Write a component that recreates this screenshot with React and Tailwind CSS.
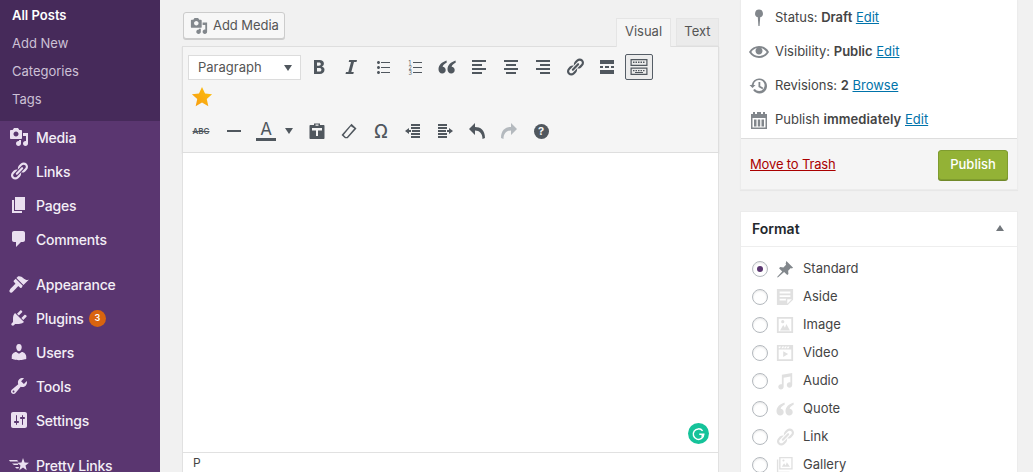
import React from "react";

const P = {
  media: "M13 11V4c0-.55-.45-1-1-1h-1.67L9 1H5L3.67 3H2c-.55 0-1 .45-1 1v7c0 .55.45 1 1 1h10c.55 0 1-.45 1-1zM7 4.5c1.38 0 2.5 1.12 2.5 2.5S8.38 9.5 7 9.5 4.5 8.38 4.5 7 5.62 4.5 7 4.5zM14 6h5v10.5c0 1.38-1.12 2.5-2.5 2.5S14 17.88 14 16.5s1.12-2.5 2.5-2.5c.17 0 .34.02.5.05V9h-3V6zm-4 8.05V13h2v3.5c0 1.38-1.12 2.5-2.5 2.5S7 17.88 7 16.5 8.12 14 9.5 14c.17 0 .34.02.5.05z",
  links: "M17.74 2.76c1.68 1.69 1.68 4.41 0 6.1l-1.53 1.52c-1.12 1.12-2.7 1.47-4.14 1.09l2.62-2.61.76-.77.76-.76c.84-.84.84-2.2 0-3.04-.84-.85-2.2-.85-3.04 0l-.77.76-3.38 3.38c-.37-1.44-.02-3.02 1.1-4.14l1.52-1.53c1.69-1.68 4.42-1.68 6.1 0zM8.59 13.43l5.34-5.34c.42-.42.42-1.1 0-1.52-.44-.43-1.13-.39-1.53 0l-5.33 5.34c-.42.42-.42 1.1 0 1.52.44.43 1.13.39 1.52 0zm-.76 2.29l4.14-4.15c.38 1.44.03 3.02-1.09 4.14l-1.52 1.53c-1.69 1.68-4.41 1.68-6.1 0-1.68-1.68-1.68-4.42 0-6.1l1.53-1.52c1.12-1.12 2.7-1.47 4.14-1.1l-4.14 4.15c-.85.84-.85 2.2 0 3.05.84.84 2.2.84 3.04 0z",
  pages: "M6 15V2h10v13H6zm-1 1h8v2H3V5h2v11z",
  comments: "M5 2h9c1.1 0 2 .9 2 2v7c0 1.1-.9 2-2 2h-2l-5 5v-5H5c-1.1 0-2-.9-2-2V4c0-1.1.9-2 2-2z",
  appearance: "M14.48 11.06L7.41 3.99l1.5-1.5c.5-.56 2.3-.47 3.51.32 1.21.8 1.43 1.28 2.91 2.1 1.18.64 2.45 1.26 4.45.85zm-.71.71L6.7 4.7 4.93 6.47c-.39.39-.39 1.02 0 1.41l1.06 1.06c.39.39.39 1.03 0 1.42-.6.6-3.6 3.4-5.1 5.3-1 1.2-.4 2.2.5 2.8.8.5 1.6.3 2.4-.6 1.4-1.6 4.3-4.7 4.9-5.2.39-.39 1.02-.39 1.41 0l1.06 1.06c.39.39 1.02.39 1.41 0z",
  plugins: "M13.11 4.36L9.87 7.6 8 5.73l3.24-3.24c.35-.34 1.05-.2 1.56.32.52.51.66 1.21.31 1.55zm-8 1.77l.91-1.12 9.01 9.01-1.19.84c-.71.71-2.63 1.16-3.82 1.16H6.14L4.9 17.26c-.59.59-1.54.59-2.12 0-.59-.58-.59-1.53 0-2.12l1.24-1.24v-3.88c0-1.13.4-3.19 1.09-3.89zm7.26 3.97l3.24-3.24c.34-.35 1.04-.21 1.55.31.52.51.66 1.21.31 1.55l-3.24 3.25z",
  users: "M10 9.25c-2.27 0-2.73-3.44-2.73-3.44C7 4.02 7.82 2 9.97 2c2.16 0 2.98 2.02 2.71 3.81 0 0-.41 3.44-2.68 3.44zm0 2.57L12.72 10c2.39 0 4.52 2.33 4.52 4.53v2.49s-3.65 1.13-7.24 1.13c-3.65 0-7.24-1.13-7.24-1.13v-2.49c0-2.25 1.94-4.48 4.47-4.48z",
  tools: "M16.68 9.77c-1.34 1.34-3.3 1.67-4.95.99l-5.41 6.52c-.99.99-2.59.99-3.58 0s-.99-2.59 0-3.57l6.52-5.42c-.68-1.65-.35-3.61.99-4.95 1.28-1.28 3.12-1.62 4.72-1.06l-2.89 2.89 2.82 2.82 2.86-2.87c.53 1.58.18 3.39-1.08 4.65zM3.81 16.21c.4.39 1.04.39 1.43 0 .4-.4.4-1.04 0-1.43-.39-.4-1.03-.4-1.43 0-.39.39-.39 1.03 0 1.43z",
  settings: "M18 16V4c0-1.1-.9-2-2-2H4c-1.1 0-2 .9-2 2v12c0 1.1.9 2 2 2h12c1.1 0 2-.9 2-2zM8 11h1c.55 0 1 .45 1 1s-.45 1-1 1H8v1.5c0 .28-.22.5-.5.5s-.5-.22-.5-.5V13H6c-.55 0-1-.45-1-1s.45-1 1-1h1V5.5c0-.28.22-.5.5-.5s.5.22.5.5V11zm5-2h-1c-.55 0-1-.45-1-1s.45-1 1-1h1V5.5c0-.28.22-.5.5-.5s.5.22.5.5V7h1c.55 0 1 .45 1 1s-.45 1-1 1h-1v5.5c0 .28-.22.5-.5.5s-.5-.22-.5-.5V9z",
  pretty: "M0 5h8l1.5 1.5H1zM3 8.5h6.5l-.6 1.6H5zM6 12h4l-.6 1.5H7.5zM14 3l1.6 4.6 4.4.2-3.5 2.8 1.2 4.6-3.7-2.7-3.7 2.7 1.2-4.6-3-2.8 4-.2z",
  bold: "M5 3h5.6c2.6 0 4.3 1.3 4.3 3.5 0 1.5-.8 2.5-2.1 3 1.7.4 2.7 1.6 2.7 3.3 0 2.6-1.9 4.2-4.8 4.2H5zm3 2.4v3.3h1.9c1.2 0 1.9-.6 1.9-1.7s-.7-1.6-1.9-1.6zm0 5.5v3.7h2.2c1.4 0 2.2-.7 2.2-1.9 0-1.2-.8-1.8-2.2-1.8z",
  italic: "M16 3l-.5 2h-2.500l-2.700 10h2.500l-.5 2H4.500l.5-2h2.300l2.700-10H7.700l.5-2z",
  ul: "M5.5 7C4.67 7 4 6.33 4 5.5 4 4.68 4.67 4 5.5 4 6.32 4 7 4.68 7 5.5 7 6.33 6.32 7 5.5 7zM8 5h9v1H8V5zm-2.5 7c-.83 0-1.5-.67-1.5-1.5C4 9.68 4.67 9 5.5 9c.82 0 1.5.68 1.5 1.5 0 .83-.68 1.5-1.5 1.5zM8 10h9v1H8v-1zm-2.5 7c-.83 0-1.5-.67-1.5-1.5 0-.82.67-1.5 1.5-1.5.82 0 1.5.68 1.5 1.5 0 .83-.68 1.5-1.5 1.5zM8 15h9v1H8v-1z",
  quote: "M9.500 3.500C5 5 1.500 8 1.500 12.300c0 2.400 1.500 4.200 3.700 4.200 2 0 3.500-1.400 3.500-3.400 0-1.900-1.300-3.300-3.100-3.400.4-1.500 1.900-3 4.200-4.100zM18.500 3.500C14 5 10.500 8 10.500 12.300c0 2.400 1.500 4.200 3.700 4.200 2 0 3.500-1.400 3.500-3.400 0-1.900-1.300-3.300-3.100-3.400.4-1.500 1.900-3 4.200-4.100z",
  alignL: "M3 3h14v2H3zM3 7h10v2H3zM3 11h14v2H3zM3 15h10v2H3z",
  alignC: "M3 3h14v2H3zM5 7h10v2H5zM3 11h14v2H3zM5 15h10v2H5z",
  alignR: "M3 3h14v2H3zM7 7h10v2H7zM3 11h14v2H3zM7 15h10v2H7z",
  more: "M3 3h14v4H3zM3 9h3v2H3zM8 9h4v2H8zM14 9h3v2h-3zM3 13h14v4H3z",
  hr: "M3 9h14v2H3z",
  clipboard: "M7 2.5h6V4h3.5c.6 0 1 .4 1 1v12c0 .6-.4 1-1 1h-13c-.6 0-1-.4-1-1V5c0-.6.4-1 1-1H7zM8.500 3.600v1.200h3V3.600zM5 7v2.500h4V15h2V9.500h4V7z",
  eraser: "M12.500 2.800l5 4.600-8.800 9.800H6L2.500 14zM11.900 5.200L4.700 13.900l2 2h1.200l7.400-8.400z",
  outdent: "M8 3h9v2H8zM8 6h9v2H8zM9 9h8v2H9zM8 12h9v2H8zM8 15h9v2H8zM2 10l4-3v2h2v2H6v2z",
  indent: "M3 3h9v2H3zM3 6h9v2H3zM3 9h8v2H3zM3 12h9v2H3zM3 15h9v2H3zM18 10l-4-3v2h-2v2h2v2z",
  undo: "M2 8l6-6v4c5.500 0 10 3 10 11l-2.500 1c0-5.500-3-8.500-7.500-8.500V14z",
  redo: "M18 8l-6-6v4C6.500 6 2 9 2 17l2.500 1c0-5.500 3-8.500 7.500-8.500V14z",
  pin: "M10 1.500a4 4 0 0 1 1.200 7.800L10.600 18h-1.200L8.800 9.300A4 4 0 0 1 10 1.500z",
  eye: "M19.700 9.400C17.700 6 14 3.900 10 3.900S2.300 6 .3 9.400L0 10l.3.6c2 3.400 5.700 5.500 9.700 5.500s7.700-2.100 9.700-5.500l.3-.6-.3-.6zM10 14.100c-3.100 0-6-1.600-7.700-4.100C3.600 8 5.700 6.600 8 6.100c-.9.600-1.500 1.700-1.500 2.900 0 1.900 1.600 3.500 3.500 3.500s3.500-1.600 3.500-3.500c0-1.200-.6-2.300-1.500-2.900 2.300.5 4.400 1.900 5.700 3.900-1.700 2.500-4.600 4.100-7.700 4.100z",
  clock: "M10.500 2.500a7.500 7.500 0 1 1-6.400 11.400l1.700-1a5.500 5.500 0 1 0-1.200-4H6.500L3.500 12 .5 8.900h2.100A7.500 7.500 0 0 1 10.500 2.500zM9.500 6h1.800v4.100l3 1.700-.9 1.500-3.900-2.300z",
  calendar: "M4 2h2v2h2V2h4v2h2V2h2v2h2v15H2V4h2zM3.500 8v9.500h13V8zM5 9.500h2.500v7H5zM8.800 9.500h2.400v7H8.800zM12.500 9.500H15v7h-2.500z",
  stickpin: "M11.500 1l7.500 7.500-1.500 1-1-.5-3 3 .3 3.500-1.300 1.300-3.500-3.500L2 19.500l-.8-.7 5.700-6.100-3.500-3.500 1.300-1.300 3.500.3 3-3-.5-1z",
  aside: "M1 1h18v12l-6 6H1zM4 4v2h12V4zM4 8v2h12V8zM4 12v2h7v-2zM12.500 17.500l5-5h-5z",
  image: "M1 1h18v18H1zM3 3v14h14V3zM4.500 16l3.500-6 2 3 1.500-4 4 7zM7.500 4.500a1.800 1.800 0 1 1 0 3.600 1.800 1.800 0 0 1 0-3.600z",
  video: "M1 1h18v18H1zM3 6v11h14V6zM3 2.700v2h1.500l1-2zM7 2.700l-1 2h2l1-2zM10 2.700l-1 2h2l1-2zM13 2.700l-1 2h2l1-2zM8 8l5.500 3.200L8 14.500z",
  audio: "M6.500 3L18 1v13.500c0 1.700-1.300 3-3 3s-3-1.300-3-3 1.300-3 3-3c.3 0 .6 0 1 .1V5l-7.500 1.300V16.500c0 1.700-1.300 3-3 3s-3-1.300-3-3 1.300-3 3-3c.4 0 .7 0 1 .1z",
  gallery: "M3.500 1h15v14h-15zM5 2.500v11h12v-11zM6.500 12l2.500-4 1.700 2.500L12 7l3.500 5zM8.300 3.800a1.200 1.200 0 1 1 0 2.400 1.200 1.200 0 0 1 0-2.400zM1 4h1.500v13.500H15V19H1z",
};

function I({ d, size = 20, cls = "" }) {
  return (
    <svg viewBox="0 0 20 20" width={size} height={size} className={`fill-current shrink-0 ${cls}`}>
      <path fillRule="evenodd" d={d} />
    </svg>
  );
}

const subItems = [
  ["All Posts", "font-semibold text-white"],
  ["Add New", "text-[#cdc1d6]"],
  ["Categories", "text-[#cdc1d6]"],
  ["Tags", "text-[#cdc1d6]"],
];

function Nav({ icon, label, gap, badge }) {
  return (
    <div className={`flex h-[34px] items-center pb-[2px] text-[14px] font-medium tracking-[-0.2px] text-[#f3eef6] ${gap ? "mt-[11px]" : ""}`}>
      <div className="flex w-9 justify-center pl-[2px] text-[#eadff0]">
        <I d={icon} />
      </div>
      <span>{label}</span>
      {badge && (
        <span className="ml-[5px] flex h-[17px] w-[17px] items-center justify-center rounded-full bg-[#d9640f] text-[9px] font-semibold text-white">
          {badge}
        </span>
      )}
    </div>
  );
}

function Sidebar() {
  return (
    <div className="w-40 shrink-0 bg-[#5a3670]">
      <div className="h-[121px] bg-[#462a5a] pt-[2px]">
        {subItems.map(([t, c]) => (
          <div key={t} className={`flex h-[28px] items-center pl-3 text-[13px] ${c}`}>{t}</div>
        ))}
      </div>
      <Nav icon={P.media} label="Media" />
      <Nav icon={P.links} label="Links" />
      <Nav icon={P.pages} label="Pages" />
      <Nav icon={P.comments} label="Comments" />
      <Nav icon={P.appearance} label="Appearance" gap />
      <Nav icon={P.plugins} label="Plugins" badge="3" />
      <Nav icon={P.users} label="Users" />
      <Nav icon={P.tools} label="Tools" />
      <Nav icon={P.settings} label="Settings" />
      <Nav icon={P.pretty} label="Pretty Links" gap />
    </div>
  );
}

function TB({ d, w = "w-8" }) {
  return (
    <div className={`flex h-[26px] ${w} items-center justify-center text-[#50575e]`}>
      <I d={d} />
    </div>
  );
}

function OL() {
  return (
    <div className="flex h-[26px] w-8 items-center justify-center text-[#50575e]">
      <svg viewBox="0 0 20 20" width="20" height="20" className="fill-current">
        <path d="M8 5h9v1H8zM8 10h9v1H8zM8 15h9v1H8z" />
        <text x="3.500" y="7.500" fontSize="5.500" fontFamily="Inter, sans-serif">1</text>
        <text x="3.500" y="12.500" fontSize="5.500" fontFamily="Inter, sans-serif">2</text>
        <text x="3.500" y="17.500" fontSize="5.500" fontFamily="Inter, sans-serif">3</text>
      </svg>
    </div>
  );
}

function Toolbar() {
  return (
    <div className="border border-[#dedede] bg-[#f5f5f5] pl-[5px] shadow-[0_1px_1px_rgba(0,0,0,0.12)]">
      <div className="flex h-[37px] items-start pt-[8px]">
        <div className="flex h-[25px] w-[113px] items-center justify-between border border-[#dcdcdc] bg-white pl-[9px] pr-[8px] text-[13px] text-[#555]">
          <span>Paragraph</span>
          <span className="h-0 w-0 border-x-[4px] border-t-[6px] border-x-transparent border-t-[#50575e]" />
        </div>
        <div className="-mt-px ml-[2px] flex items-center">
          <TB d={P.bold} />
          <TB d={P.italic} />
          <TB d={P.ul} />
          <OL />
          <TB d={P.quote} />
          <TB d={P.alignL} />
          <TB d={P.alignC} />
          <TB d={P.alignR} />
          <TB d={P.links} />
          <TB d={P.more} />
          <div className="ml-[2px] flex h-[26px] w-[28px] items-center justify-center rounded-[2px] border border-[#555d66] bg-[#ececec] text-[#50575e]">
            <svg viewBox="0 0 20 20" width="20" height="20" className="fill-current">
              <path fillRule="evenodd" d="M1.500 2h17v7h-17zM2.700 3.200v4.600h14.600V3.200zM1.500 10.500h17V18h-17zM2.700 11.700v5.100h14.600v-5.100z" />
              <path d="M4 4.500h1.500v1.500H4zM6.500 4.500H8v1.500H6.500zM9 4.500h1.500v1.500H9zM11.500 4.500H13v1.500h-1.500zM14 4.500h1.500v1.500H14zM4 13h1.500v1.300H4zM6.500 13H8v1.300H6.500zM9 13h1.500v1.300H9zM11.500 13H13v1.300h-1.500zM14 13h1.500v1.300H14zM6 15h8v1H6z" />
            </svg>
          </div>
        </div>
      </div>
      <div className="flex h-[26px] items-center pl-[3px]">
        <svg viewBox="0 0 24 24" width="22" height="22">
          <defs>
            <linearGradient id="star" x1="0" y1="1" x2="1" y2="0">
              <stop offset="0" stopColor="#f79a12" />
              <stop offset="1" stopColor="#fdc30f" />
            </linearGradient>
          </defs>
          <path fill="url(#star)" d="M12 1l3.300 7.300 7.700.8-5.800 5.200 1.700 7.700L12 18l-6.900 4 1.700-7.700L1 9.100l7.700-.8z" />
        </svg>
      </div>
      <div className="flex h-[42px] items-center pb-[8px] pt-[8px]">
        <div className="-ml-px flex h-[26px] w-[28px] items-center justify-center text-[8px] font-semibold text-[#50575e] line-through decoration-[0.5px]">ABC</div>
        <div className="ml-[5px]"><TB d={P.hr} w="w-[28px]" /></div>
        <div className="ml-[5px] flex h-[26px] w-[26px] flex-col items-center justify-center text-[#50575e]">
          <span className="text-[17px] leading-[16px]">A</span>
          <span className="mt-px h-[3px] w-[20px] bg-[#50575e]" />
        </div>
        <div className="flex w-[20px] justify-center">
          <span className="h-0 w-0 border-x-[4px] border-t-[6px] border-x-transparent border-t-[#50575e]" />
        </div>
        <div className="ml-[2px] flex items-center">
          <TB d={P.clipboard} />
          <TB d={P.eraser} />
          <div className="flex h-[26px] w-8 items-center justify-center text-[18px] font-medium text-[#50575e]">Ω</div>
          <TB d={P.outdent} />
          <TB d={P.indent} />
          <TB d={P.undo} />
          <div className="flex h-[26px] w-8 items-center justify-center text-[#b4b9be]"><I d={P.redo} /></div>
          <div className="flex h-[26px] w-8 items-center justify-center">
            <span className="flex h-[15px] w-[15px] items-center justify-center rounded-full bg-[#50575e] text-[11px] font-bold text-[#f5f5f5]">?</span>
          </div>
        </div>
      </div>
    </div>
  );
}

function Editor() {
  return (
    <div className="ml-[22px] w-[537px] shrink-0 pt-3">
      <div className="flex h-[34px] items-start justify-between">
        <div className="ml-px flex h-[27px] w-[102px] items-center rounded-[3px] border border-[#cccccc] bg-[#f7f7f7] pl-[6px] text-[13px] tracking-[-0.05px] text-[#555] shadow-[0_1px_0_#cccccc]">
          <I d={P.media} size={18} cls="text-[#82878c] mr-[5px]" />
          Add Media
        </div>
        <div className="flex pt-[6px]">
          <div className="relative z-10 flex h-[29px] w-[55px] items-center justify-center border border-b-0 border-[#e5e5e5] bg-[#f5f5f5] pb-[2px] text-[13px] text-[#555]">Visual</div>
          <div className="ml-[5px] flex h-[28px] w-[43px] items-center justify-center border border-[#e5e5e5] bg-[#ebebeb] pb-px text-[13px] text-[#555]">Text</div>
        </div>
      </div>
      <Toolbar />
      <div className="relative h-[300px] border-x border-b border-[#e1e1e1] bg-white">
        <div className="absolute bottom-[8px] right-[9px] flex h-[21px] w-[21px] items-center justify-center rounded-full bg-[#15c39a]">
          <svg viewBox="0 0 20 20" width="15" height="15" fill="none" stroke="white" strokeWidth="2">
            <path d="M15.500 6.500A7 7 0 1 0 17 11h-6" />
            <path d="M14 14l3-3" />
          </svg>
        </div>
      </div>
      <div className="h-[30px] border-x border-[#e1e1e1] bg-white pl-[10px] text-[12px] leading-[20px] text-[#444]">P</div>
    </div>
  );
}

function Row({ icon, children }) {
  return (
    <div className="flex h-[34px] items-center text-[13px] text-[#444]">
      <div className="flex w-[25px] justify-center pr-[7px] text-[#82878c]"><I d={icon} /></div>
      <span>{children}</span>
    </div>
  );
}

const A = ({ children }) => <a className="text-[#0073aa] underline">{children}</a>;

function Publish() {
  return (
    <div className="border-x border-b border-[#ececec] bg-white shadow-[0_1px_1px_rgba(0,0,0,0.04)]">
      <div className="h-[138px] pl-[9px] pt-px">
        <Row icon={P.pin}>Status: <b className="font-semibold">Draft</b> <A>Edit</A></Row>
        <Row icon={P.eye}>Visibility: <b className="font-semibold">Public</b> <A>Edit</A></Row>
        <Row icon={P.clock}>Revisions: <b className="font-semibold">2</b> <A>Browse</A></Row>
        <Row icon={P.calendar}>Publish <b className="font-semibold tracking-[0.1px]">immediately</b> <A>Edit</A></Row>
      </div>
      <div className="flex h-[51px] items-center justify-between border-t border-[#dddddd] bg-[#f5f5f5] pl-[9px] pr-[9px] pt-[2px]">
        <a className="text-[13px] tracking-[-0.15px] text-[#a00] underline">Move to Trash</a>
        <div className="flex h-[30px] w-[70px] items-center justify-center rounded-[3px] border border-[#7f9c2f] bg-[#93b236] text-[13px] font-medium text-white shadow-[0_1px_0_#71892a]">Publish</div>
      </div>
    </div>
  );
}

const formats = [
  ["Standard", P.stickpin],
  ["Aside", P.aside],
  ["Image", P.image],
  ["Video", P.video],
  ["Audio", P.audio],
  ["Quote", P.quote],
  ["Link", P.links],
  ["Gallery", P.gallery],
];

function Format() {
  return (
    <div className="mt-[21px] border border-b-0 border-[#ececec] bg-white">
      <div className="flex h-[35px] items-center justify-between border-b border-[#eeeeee] pb-[2px] pl-[11px] pr-[13px] text-[14px] font-semibold text-[#23282d]">
        <span>Format</span>
        <span className="h-0 w-0 border-x-[4px] border-b-[6px] border-x-transparent border-b-[#72777c]" />
      </div>
      <div className="pl-[11px] pt-[8px]">
        {formats.map(([t, d], i) => (
          <div key={t} className="flex h-[28px] items-center text-[13px] text-[#444]">
            <span className="flex h-4 w-4 items-center justify-center rounded-full border border-[#b4b9be] bg-white shadow-[inset_0_1px_2px_rgba(0,0,0,0.1)]">
              {i === 0 && <span className="h-[6px] w-[6px] rounded-full bg-[#5a3670]" />}
            </span>
            <div className={`ml-[7px] flex w-[20px] justify-center ${i === 0 ? "text-[#82878c]" : "text-[#e0e0e0]"}`}>
              <I d={d} size={i === 5 || i === 6 ? 20 : 18} />
            </div>
            <span className="ml-[8px]">{t}</span>
          </div>
        ))}
      </div>
    </div>
  );
}

export default function App() {
  return (
    <div className="flex h-[472px] w-[1033px] overflow-hidden bg-[#f1f1f1] font-['Inter','Liberation_Sans',sans-serif]">
      <Sidebar />
      <Editor />
      <div className="ml-[21px] w-[278px] shrink-0">
        <Publish />
        <Format />
      </div>
    </div>
  );
}
